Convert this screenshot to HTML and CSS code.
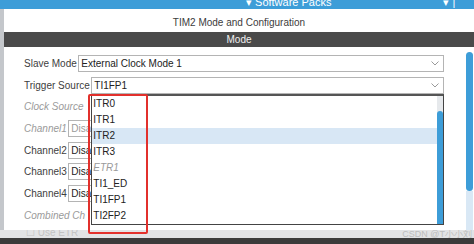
FILE: index.html
```html
<!DOCTYPE html>
<html lang="en">
<head>
    <meta charset="UTF-8">
    <title>TIM2 Mode and Configuration</title>
    <link rel="stylesheet" href="styles.css">
</head>
<body>
    <div class="topbar">
        <span class="tab">&#9662; Software Packs</span>
        <span class="tab">&#9662; |</span>
    </div>
    <div class="main">
        <div class="side-strip"></div>
        <div class="panel">
            <div class="panel-title">TIM2 Mode and Configuration</div>
            <div class="section-bar">Mode</div>
            <div class="panel-body">
                <div class="form">
                    <div class="row">
                        <span class="label">Slave Mode</span>
                        <div class="select wide">
                            <span class="value">External Clock Mode 1</span>
                            <svg class="chevron" width="8" height="5" viewBox="0 0 8 5"><path d="M0.5 0.5 L4 4 L7.5 0.5" fill="none" stroke="#9a9a9a" stroke-width="1"/></svg>
                        </div>
                    </div>
                    <div class="row">
                        <span class="label">Trigger Source</span>
                        <div class="select wide">
                            <span class="value">TI1FP1</span>
                            <svg class="chevron" width="8" height="5" viewBox="0 0 8 5"><path d="M0.5 0.5 L4 4 L7.5 0.5" fill="none" stroke="#9a9a9a" stroke-width="1"/></svg>

                            <div class="dropdown">
                                <ul class="options">
                                    <li>ITR0</li>
                                    <li>ITR1</li>
                                    <li class="selected">ITR2</li>
                                    <li>ITR3</li>
                                    <li class="off">ETR1</li>
                                    <li>TI1_ED</li>
                                    <li>TI1FP1</li>
                                    <li>TI2FP2</li>
                                </ul>
                                <div class="list-scroll"><div class="list-thumb"></div></div>
                                <div class="mark"></div>
                            </div>
                        </div>
                    </div>
                    <div class="row"><span class="label muted">Clock Source</span></div>
                    <div class="row">
                        <span class="label muted">Channel1</span>
                        <div class="select narrow disabled"><span class="value">Disa</span></div>
                    </div>
                    <div class="row">
                        <span class="label">Channel2</span>
                        <div class="select narrow"><span class="value">Disa</span></div>
                    </div>
                    <div class="row">
                        <span class="label">Channel3</span>
                        <div class="select narrow"><span class="value">Disa</span></div>
                    </div>
                    <div class="row">
                        <span class="label">Channel4</span>
                        <div class="select narrow"><span class="value">Disa</span></div>
                    </div>
                    <div class="row"><span class="label muted clipped">Combined Ch</span></div>
                </div>
                <div class="vscroll"><div class="vthumb"></div></div>
            </div>
        </div>
    </div>
    <div class="hband">
        <span class="faded">&#9744; Use ETR</span>
        <span class="watermark">CSDN @T小小刘</span>
    </div>
    <div class="bottombar"></div>
</body>
</html>
```

FILE: styles.css
```css
body {
    margin: 0;
    width: 474px;
    height: 244px;
    overflow: hidden;
    display: flex;
    flex-direction: column;
    background: #fff;
    font-family: "Liberation Sans", Arial, sans-serif;
    font-size: 10px;
    color: #333;
}
.topbar {
    height: 9px;
    flex: none;
    background: #3d9dd8;
    display: flex;
    gap: 112px;
    padding-left: 246px;
    overflow: hidden;
}
.topbar .tab {
    color: #fff;
    font-size: 11px;
    line-height: 11px;
    margin-top: -3px;
    white-space: nowrap;
}
.main {
    height: 221px;
    flex: none;
    display: flex;
}
.side-strip {
    width: 4px;
    background: #c4c7cb;
}
.panel {
    flex: 1;
    display: flex;
    flex-direction: column;
}
.panel-title {
    height: 23px;
    line-height: 27px;
    text-align: center;
    color: #3c3c3c;
}
.section-bar {
    height: 15px;
    line-height: 15px;
    text-align: center;
    background: #4a4a4a;
    color: #f0f0f0;
}
.panel-body {
    flex: 1;
    display: flex;
}
.form {
    flex: 1;
    display: flex;
    flex-direction: column;
    gap: 4.7px;
    padding: 8px 20px 0 20px;
}
.row {
    height: 17px;
    display: flex;
    align-items: center;
    gap: 1.5px;
    white-space: nowrap;
}
.label {
    color: #404040;
}
.label.muted {
    color: #9a9a9a;
    font-style: italic;
}
.label.clipped {
    width: 66px;
    overflow: hidden;
}
.select {
    height: 17px;
    box-sizing: border-box;
    border: 1px solid #b4b4b4;
    background: #fff;
    display: flex;
    align-items: center;
    padding-left: 2px;
    position: relative;
    color: #222;
}
.select.wide {
    flex: 1;
}
.select.narrow {
    width: 25px;
    overflow: hidden;
}
.select.disabled {
    color: #9a9a9a;
}
.select .value {
    flex: 1;
}
.select .chevron {
    margin-right: 4px;
}
.dropdown {
    position: absolute;
    top: 16px;
    left: -1px;
    right: -1px;
    height: 131px;
    box-sizing: border-box;
    border-top: 2px solid #555;
    border-left: 1px solid #444;
    border-right: 1px solid #444;
    border-bottom: 1px solid #444;
    background: #fff;
    display: flex;
    z-index: 5;
}
.options {
    list-style: none;
    margin: 0;
    padding: 0;
    flex: 1;
}
.options li {
    height: 16px;
    line-height: 16px;
    padding-left: 1px;
    color: #222;
}
.options li.selected {
    background: #d8e7f5;
}
.options li.off {
    color: #9a9a9a;
    font-style: italic;
}
.list-scroll {
    width: 6px;
    background: #e6e9ec;
    display: flex;
    flex-direction: column;
    justify-content: flex-end;
}
.list-thumb {
    height: 113px;
    background: #3d9dd8;
    border-radius: 3px 3px 0 0;
}
.mark {
    position: absolute;
    left: -4px;
    top: -2px;
    width: 60px;
    height: 140px;
    box-sizing: border-box;
    border: 2px solid #e2302c;
    border-radius: 2px;
}
.vscroll {
    width: 10px;
    display: flex;
    flex-direction: column;
    align-items: center;
    padding-top: 5px;
    box-sizing: border-box;
}
.vthumb {
    width: 7px;
    height: 139px;
    background: #3d9dd8;
    border-radius: 4px;
}
.vscroll::after {
    content: "";
    flex: 1;
    width: 7px;
    background: #d9e8f5;
}
.hband {
    height: 8px;
    flex: none;
    background: #e2e3e5;
    display: flex;
    justify-content: space-between;
    align-items: flex-start;
    padding: 0 2px 0 26px;
    overflow: hidden;
}
.hband .faded {
    color: #c4c4c4;
    font-size: 10px;
    line-height: 8px;
    margin-top: -1px;
}
.hband .watermark {
    color: #bcbcbc;
    font-size: 9px;
    line-height: 8px;
}
.bottombar {
    flex: 1;
    background: #3b3b3b;
}
```
